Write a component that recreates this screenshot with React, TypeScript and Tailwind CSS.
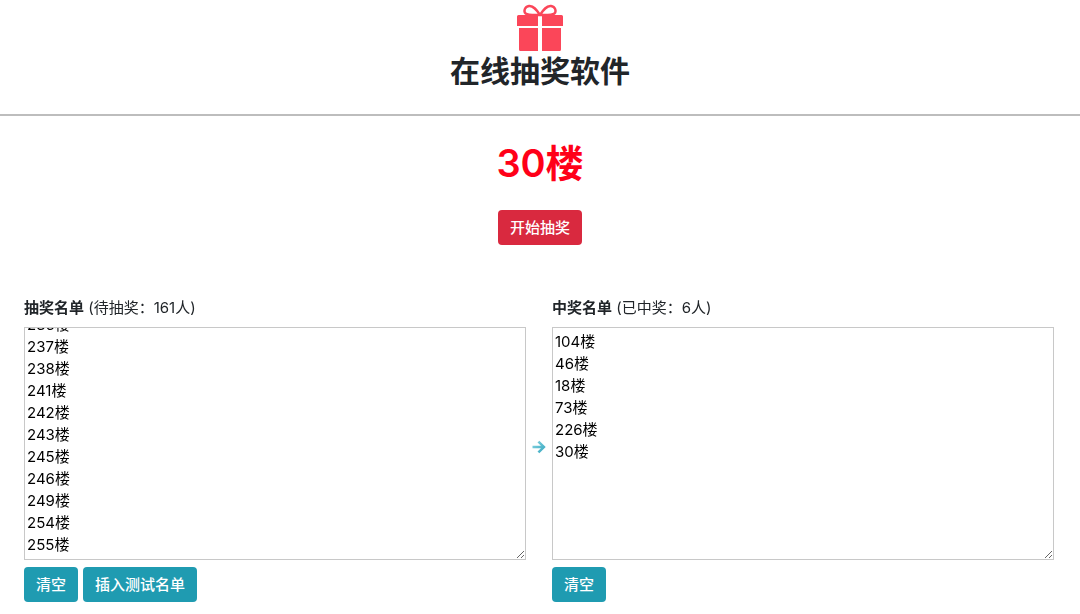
import {ButtonHTMLAttributes, ReactNode, useEffect, useRef, useState} from "react"
import {clsx} from "clsx"

const waitingNames = [
  "236楼",
  "237楼",
  "238楼",
  "241楼",
  "242楼",
  "243楼",
  "245楼",
  "246楼",
  "249楼",
  "254楼",
  "255楼",
]

const winnerNames = ["104楼", "46楼", "18楼", "73楼", "226楼", "30楼"]

const GiftIcon = () => (
  <svg width="48" height="48" viewBox="0 0 48 48" fill="none" aria-hidden="true">
    <path
      d="M24 11C20 11 12 11.500 9.500 9.500C7.500 7.500 8.500 2.500 13 2C18 1.500 21 6.500 24 11ZM24 11C28 11 36 11.500 38.500 9.500C40.500 7.500 39.500 2.500 35 2C30 1.500 27 6.500 24 11Z"
      stroke="#fb4659"
      strokeWidth="2.4"
      strokeLinejoin="round"
    />
    <path
      d="M2.500 11H22V22H1V12.500Q1 11 2.500 11ZM26 11H45.500Q47 11 47 12.500V22H26ZM3 24H22V47H4.500Q3 47 3 45.500ZM26 24H45V45.500Q45 47 43.500 47H26Z"
      fill="#fb4659"
    />
  </svg>
)

const ArrowIcon = () => (
  <svg width="14" height="14" viewBox="0 0 14 14" fill="none" aria-hidden="true">
    <defs>
      <linearGradient id="arrow" x1="0" y1="0" x2="14" y2="14" gradientUnits="userSpaceOnUse">
        <stop stopColor="#8ed8e4" />
        <stop offset="1" stopColor="#2fa3bd" />
      </linearGradient>
    </defs>
    <path d="M0.500 5.800H9L5.500 2.500L7.300 0.800L13.700 7L7.300 13.200L5.500 11.500L9 8.200H0.500Z" fill="url(#arrow)" />
  </svg>
)

type ButtonProps = ButtonHTMLAttributes<HTMLButtonElement> & {
  variant?: "danger" | "info"
}

const Button = ({variant = "info", children, ...props}: ButtonProps) => (
  <button
    type="button"
    className={clsx(
      "cursor-pointer rounded px-3 py-1.5 text-[15px] leading-[23px] font-medium text-white",
      variant === "danger" ? "bg-[#d9293f]" : "bg-[#1f9bb1]"
    )}
    {...props}
  >
    {children}
  </button>
)

type NameListProps = {
  id: string
  title: string
  summary: string
  value: string
  onChange: (value: string) => void
  children: ReactNode
}

const NameList = ({id, title, summary, value, onChange, children}: NameListProps) => {
  const ref = useRef<HTMLTextAreaElement>(null)

  // Keep the newest names in view.
  useEffect(() => {
    if (ref.current) ref.current.scrollTop = ref.current.scrollHeight
  }, [value])

  return (
    <div className="min-w-0 flex-1">
      <label htmlFor={id} className="mb-[7px] block text-[15px] leading-[24px]">
        <b>{title}</b> ({summary})
      </label>
      <textarea
        ref={ref}
        id={id}
        value={value}
        onChange={e => onChange(e.target.value)}
        className="block h-[233px] w-full resize border border-[#c8c8c8] bg-white px-0.5 py-[3px] text-[15px] leading-[22px] text-black [scrollbar-width:none]"
      />
      <div className="mt-[7px] flex gap-[5px]">{children}</div>
    </div>
  )
}

const App = () => {
  const [waiting, setWaiting] = useState(waitingNames.join("\n"))
  const [winners, setWinners] = useState(winnerNames.join("\n"))

  return (
    <div className="bg-white font-[Inter,'Noto_Sans_CJK_SC',sans-serif] text-[#212529]">
      <header className="flex flex-col items-center border-b-2 border-[#bdbdbd] pt-1 pb-6">
        <GiftIcon />
        <h1 className="text-[30px] leading-[38px] font-semibold">在线抽奖软件</h1>
      </header>

      <main>
        <section className="flex flex-col items-center gap-6 pt-6">
          <output className="text-[38px] leading-[46px] font-semibold text-[#ff0018]">30楼</output>
          <Button variant="danger">开始抽奖</Button>
        </section>

        <section className="flex items-center pt-[51px] pr-[26px] pl-6">
          <NameList id="waiting" title="抽奖名单" summary="待抽奖：161人" value={waiting} onChange={setWaiting}>
            <Button onClick={() => setWaiting("")}>清空</Button>
            <Button onClick={() => setWaiting(waitingNames.join("\n"))}>插入测试名单</Button>
          </NameList>
          <div className="flex w-[26px] shrink-0 justify-center pb-1">
            <ArrowIcon />
          </div>
          <NameList id="winners" title="中奖名单" summary="已中奖：6人" value={winners} onChange={setWinners}>
            <Button onClick={() => setWinners("")}>清空</Button>
          </NameList>
        </section>
      </main>
    </div>
  )
}

export default App
